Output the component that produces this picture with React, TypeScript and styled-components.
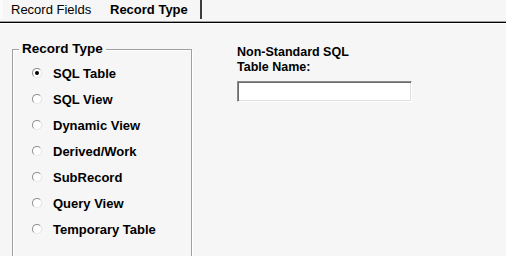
import * as React from 'react';
import styled, { createGlobalStyle } from 'styled-components';

const GlobalStyle = createGlobalStyle`
	html, body {
		margin: 0;
		padding: 0;
		background: #f6f6f6;
		font-family: "Liberation Sans", Arial, sans-serif;
		color: #000;
	}
`;

const Page = styled.div`
	width: 506px;
	height: 256px;
	overflow: hidden;
	background: #f6f6f6;
`;

const TabBar = styled.div`
	display: flex;
	height: 21px;
	border-bottom: 1px solid #a0a0a0;
	box-shadow: 0 1px 0 #000, 0 2px 0 #fff;
`;

const Tab = styled.div<{ $active?: boolean; $width: number }>`
	box-sizing: border-box;
	width: ${p => p.$width}px;
	height: 19px;
	padding: 2px 0 0 11px;
	font-size: 13px;
	line-height: 15px;
	font-weight: ${p => (p.$active ? 'bold' : 'normal')};
	white-space: nowrap;
	border-right: ${p => (p.$active ? '2px solid #3c3c3c' : 'none')};
	border-left: ${p => (p.$active ? 'none' : '3px solid #fbfbfb')};
	padding-left: ${p => (p.$active ? 11 : 8)}px;
`;

const Content = styled.div`
	display: flex;
	align-items: flex-start;
	padding: 3px 0 0 12px;
`;

const GroupBox = styled.div`
	position: relative;
	box-sizing: border-box;
	width: 180px;
	height: 220px;
	margin-top: 24px;
	border: 1px solid #a0a0a0;
	box-shadow: inset 1px 1px 0 #fff, 1px 1px 0 #fff;
	padding-top: 10px;
`;

const GroupTitle = styled.div`
	position: absolute;
	top: -8px;
	left: 6px;
	padding: 0 3px;
	background: #f6f6f6;
	font-size: 13.5px;
	line-height: 14px;
	font-weight: bold;
	white-space: nowrap;
`;

const RadioRow = styled.div`
	display: flex;
	align-items: center;
	height: 26px;
	padding-left: 19px;
	font-size: 13px;
	line-height: 15px;
	font-weight: bold;
	white-space: nowrap;
`;

const RadioDot = styled.span<{ $checked?: boolean }>`
	position: relative;
	box-sizing: border-box;
	width: 10px;
	height: 10px;
	margin-right: 11px;
	border-radius: 50%;
	border: 1px solid;
	border-color: #8c8c8c #e4e4e4 #e4e4e4 #8c8c8c;
	background: #fff;
	flex-shrink: 0;

	&::after {
		content: '';
		display: ${p => (p.$checked ? 'block' : 'none')};
		position: absolute;
		left: 2px;
		top: 2px;
		width: 4px;
		height: 4px;
		border-radius: 50%;
		background: #000;
	}
`;

const Side = styled.div`
	margin: 20px 0 0 45px;
	display: flex;
	flex-direction: column;
`;

const FieldLabel = styled.div`
	font-size: 12.5px;
	line-height: 15px;
	font-weight: bold;
	white-space: nowrap;
`;

const TextBox = styled.div`
	box-sizing: border-box;
	width: 175px;
	height: 21px;
	margin-top: 6px;
	background: #fff;
	border: 1px solid;
	border-color: #8a8a8a #fff #fff #8a8a8a;
	box-shadow: inset 1px 1px 0 #6a6a6a, inset -1px -1px 0 #dedede;
`;

const recordTypes = [
	'SQL Table',
	'SQL View',
	'Dynamic View',
	'Derived/Work',
	'SubRecord',
	'Query View',
	'Temporary Table'
];

export default function App() {
	return (
		<Page>
			<GlobalStyle />
			<TabBar>
				<Tab $width={99}>Record Fields</Tab>
				<Tab $width={103} $active>Record Type</Tab>
			</TabBar>
			<Content>
				<GroupBox>
					<GroupTitle>Record Type</GroupTitle>
					{recordTypes.map((t, i) => (
						<RadioRow key={t}>
							<RadioDot $checked={i === 0} />
							{t}
						</RadioRow>
					))}
				</GroupBox>
				<Side>
					<FieldLabel>
						Non-Standard SQL
						<br />
						Table Name:
					</FieldLabel>
					<TextBox />
				</Side>
			</Content>
		</Page>
	);
}
